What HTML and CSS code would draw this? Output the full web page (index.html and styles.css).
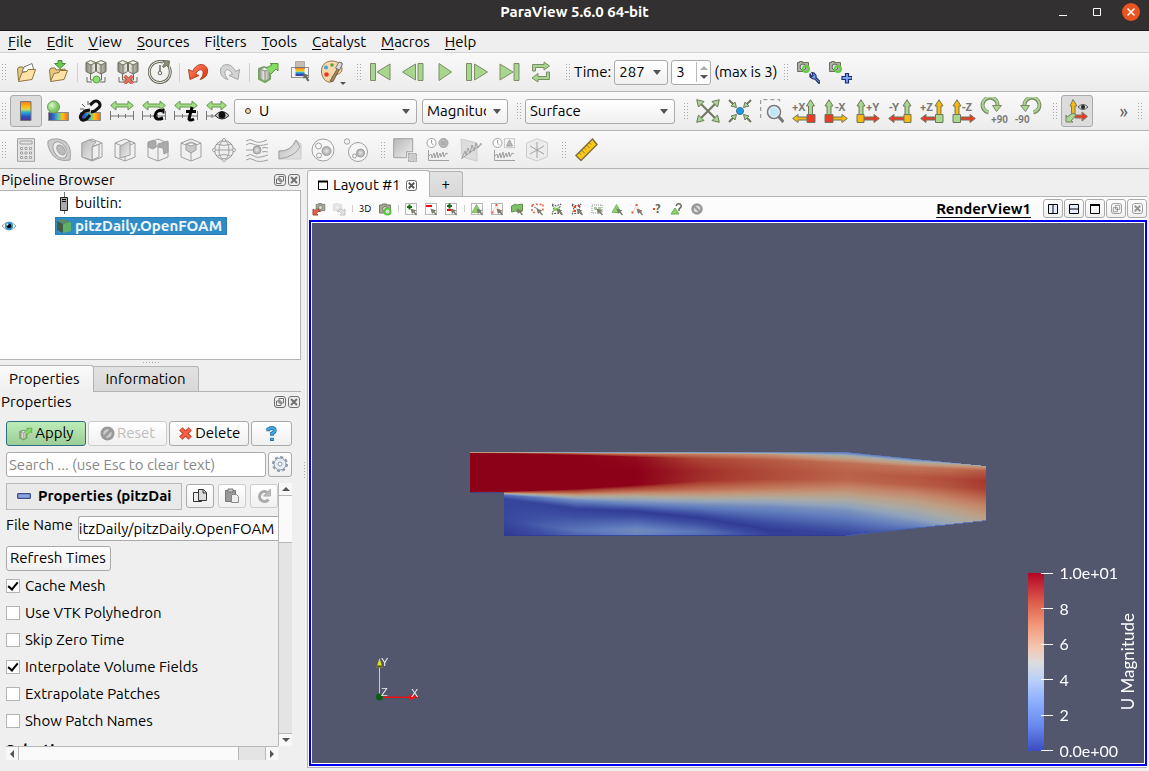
FILE: index.html
```html
<!DOCTYPE html>
<html lang="en">
<head>
  <meta charset="UTF-8">
  <meta name="viewport" content="width=device-width, initial-scale=1.0">
  <title>ParaView 5.6.0 64-bit</title>
  <link rel="stylesheet" href="styles.css">
</head>
<body>
  <!-- shared icon shapes -->
  <svg class="defs" aria-hidden="true">
    <defs>
      <linearGradient id="rainbow" x1="0" y1="1" x2="0" y2="0">
        <stop offset="0" stop-color="#5b2d91"/><stop offset=".2" stop-color="#2a4fc0"/><stop offset=".42" stop-color="#27a9d8"/>
        <stop offset=".58" stop-color="#c8d860"/><stop offset=".72" stop-color="#fcc010"/><stop offset="1" stop-color="#f47a20"/>
      </linearGradient>
      <linearGradient id="rainbowH">
        <stop offset="0" stop-color="#4b2d91"/><stop offset=".25" stop-color="#2a6fd0"/><stop offset=".5" stop-color="#5fc8a0"/>
        <stop offset=".7" stop-color="#fcc010"/><stop offset="1" stop-color="#f06a20"/>
      </linearGradient>
      <linearGradient id="metal"><stop offset="0" stop-color="#888878"/><stop offset=".5" stop-color="#f4f4ee"/><stop offset="1" stop-color="#8d8d7d"/></linearGradient>
      <linearGradient id="grey" x1="0" y1="0" x2="1" y2="1"><stop offset="0" stop-color="#b8b8b8"/><stop offset="1" stop-color="#eeeeee"/></linearGradient>
      <radialGradient id="ball"><stop offset="0" stop-color="#e8e8e8"/><stop offset="1" stop-color="#a8a8a8"/></radialGradient>
      <radialGradient id="greenBall" cx=".35" cy=".35"><stop offset="0" stop-color="#d8f8c8"/><stop offset="1" stop-color="#7cc860"/></radialGradient>
      <linearGradient id="redArrow" x1="0" y1="0" x2="1" y2="1"><stop offset="0" stop-color="#ff9070"/><stop offset="1" stop-color="#e02800"/></linearGradient>
    </defs>
    <symbol id="folder" viewBox="0 0 24 24">
      <path d="M4.500 20.500 3.500 9l1.500-2h4l1 2 9-1 1 4" fill="#e9c77c" stroke="#8c7440"/>
      <path d="M8 12 10 7l8-3.500L20 11z" fill="#fff" stroke="#777"/>
      <path d="m4.500 21.500 3.500-9 5-1 1-2 7.500 0-3.500 10z" fill="#fde3a6" stroke="#8c7440"/>
    </symbol>
    <symbol id="save" viewBox="0 0 24 24">
      <path d="M4.500 20.500 3.500 10l1.500-2h4l1 2 9-1 1 4" fill="#e9c77c" stroke="#8c7440"/>
      <path d="m4.500 21.500 3.500-8 5-1 1-2h7.500l-3.500 9z" fill="#fde3a6" stroke="#8c7440"/>
      <path d="M12 .5h4v3h3.500L14 8.500 8.500 3.500H12z" fill="#6ccc50" stroke="#4d8c3c"/>
    </symbol>
    <symbol id="servers" viewBox="0 0 24 24">
      <g stroke="#6d6d5c" fill="url(#metal)"><path d="M2 2.500v9l5 2.500 4.500-2.500v-9zM12.500 2.500v9L17 14l5-2.500v-9z"/></g>
      <g stroke="#6d6d5c" fill="#eeeee6"><path d="m2 2.500 4.500-2 5 2L7 5zM12.500 2.500l4.500-2 5 2L17 5z"/></g>
      <path d="M7 5v9M17 5v9M6.500 14v6h11v-6M3 17v5h5M21 17v5h-5" fill="none" stroke="#6d6d5c"/>
    </symbol>
    <symbol id="connect" viewBox="0 0 24 24"><use href="#servers"/><circle cx="12.500" cy="19.500" r="3.500" fill="#8ce070" stroke="#5c9c48"/></symbol>
    <symbol id="disconnect" viewBox="0 0 24 24"><use href="#servers"/><path d="m8.500 16 8 7.500m0-7.500-8 7.500" stroke="#a04838" stroke-width="3.500"/><path d="m8.500 16 8 7.500m0-7.500-8 7.500" stroke="#f07060" stroke-width="2"/></symbol>
    <symbol id="timer" viewBox="0 0 24 24">
      <path d="M15 2A10.500 10.500 0 1 0 21 7" fill="none" stroke="#6d6d5c" stroke-width="3"/><path d="M15 2A10.500 10.500 0 1 0 21 7" fill="none" stroke="#eee"/>
      <path d="M12 5v8" stroke="#6d6d5c" stroke-width="1.500"/><circle cx="12" cy="13" r="1.800" fill="#eee" stroke="#6d6d5c"/><path d="m14.500.5 7 .5-1 6.500-2-2-3 2-1-1 2-3z" fill="#8c8c7a" stroke="#6d6d5c"/>
    </symbol>
    <symbol id="undo" viewBox="0 0 24 24"><path d="m2.500 9.500 1.500 10 9-4-3.500-1.200C12.500 8 18 8.500 17 14c-.3 2-1.500 4-3 5.500 5-1 8-5 7.500-9.500C20.500 3 10.500 2 6.500 11.500z" fill="url(#redArrow)" stroke="#b04428"/></symbol>
    <symbol id="redo" viewBox="0 0 24 24"><path d="m21.500 9.500-1.500 10-9-4 3.500-1.200C11.500 8 6 8.500 7 14c.3 2 1.500 4 3 5.500-5-1-8-5-7.500-9.500C3.500 3 13.500 2 17.500 11.500z" fill="#d4d4d4" stroke="#a4a4a4"/></symbol>
    <symbol id="apply" viewBox="0 0 24 24">
      <path d="M3 9v10l6 3 5-3V9L8 7z" fill="url(#metal)" stroke="#74a860" stroke-width="2"/><path d="m3.500 9 5-1.500L13.500 9 9 11z" fill="#eee" stroke="#888"/><path d="M9 11v10" stroke="#777"/>
      <path d="m10 8 6-3-2-1.500h8v7.500l-2-2-5 5" fill="#84dc64" stroke="#569444"/>
    </symbol>
    <symbol id="colorsel" viewBox="0 0 24 24">
      <path d="M7.500 1.500h9V9h-9z" fill="#c4bcb4" stroke="#aaa"/><path d="M7.500 8h9v8h-9z" fill="url(#rainbow)"/>
      <path d="M3.500 7.500h17v10h-17z" fill="none" stroke="#333" stroke-dasharray="1 1"/><path d="m15 13 6 2.500-2 1 2.500 4-2 1-2.300-4-1.500 1.500z" fill="#6a6a5a"/>
    </symbol>
    <symbol id="palette" viewBox="0 0 24 24">
      <path d="M12 1C5 1 1 6 1.500 12S6 23 11 22c3-1 0-4 2-6s9-1 9-7c0-5-5-8-10-8z" fill="#f8d8a8" stroke="#8c7450"/>
      <circle cx="6" cy="7.500" r="2" fill="#38a8e0"/><circle cx="12" cy="5" r="1.800" fill="#60a040"/><circle cx="6.500" cy="14.500" r="2.300" fill="#e83828"/>
      <path d="m21 2-5 9-6 10 3 .5L18 12l4-7z" fill="#a88858" stroke="#6d6048"/><path d="m19 2 3.500 1.500-3 6.500-4-2z" fill="#ddd" stroke="#777"/>
    </symbol>
    <symbol id="first" viewBox="0 0 24 24"><path d="M1.500 3.500h5v17h-5zM21 4v16L8 12z"/></symbol>
    <symbol id="prev" viewBox="0 0 24 24"><path d="M17 3.500h5v17h-5zM14.500 4v16L1.500 12z"/></symbol>
    <symbol id="play" viewBox="0 0 24 24"><path d="M6 3.500v17L18.500 12z"/></symbol>
    <symbol id="next" viewBox="0 0 24 24"><path d="M1.500 3.500h5v17h-5zM9.500 4v16l13-8z"/></symbol>
    <symbol id="last" viewBox="0 0 24 24"><path d="M17 3.500h5v17h-5zM3 4v16l13-8z"/></symbol>
    <symbol id="loop" viewBox="0 0 24 24"><path d="M3.500 11V4.500H15V2l5.500 4-5.500 4V7.500H6.500V11zM20.500 12v7.500H9V22l-6-4 6-4.500v3h8.500V12z"/></symbol>
    <symbol id="camera" viewBox="0 0 24 24">
      <path d="M1.500 2.500h2v-1h3v1h6v9h-11z" fill="#b0b0a0" stroke="#6d6d5c"/><circle cx="7" cy="7" r="3" fill="#ddd" stroke="#666"/>
      <circle cx="10" cy="9" r="3" fill="none" stroke="#62cc40" stroke-width="2"/>
    </symbol>
    <symbol id="camtool" viewBox="0 0 24 24"><use href="#camera"/><path d="M14 13.500v3.500l3 2h2l4 4.500 1.500-1.500-4.500-4.500v-2l-2-2.500-2-.5 1 3-1.500 1z" fill="#7c98e0" stroke="#1c3070" stroke-width="1.200"/></symbol>
    <symbol id="camadd" viewBox="0 0 24 24"><use href="#camera"/><path d="M17.500 13.500h3v3h3.500v3h-3.500v3.500h-3v-3.500H14v-3h3.500z" fill="#80a0f0" stroke="#1c3070" stroke-width="1.200"/></symbol>
    <symbol id="cmap" viewBox="0 0 24 24"><path d="M6.500 2.500h10.500v19H6.500z" fill="url(#rainbow)" stroke="#777"/></symbol>
    <symbol id="solid" viewBox="0 0 24 24"><path d="M2.500 13.500h20v8h-20z" fill="url(#rainbowH)" stroke="#888"/><circle cx="7.500" cy="8" r="6" fill="url(#greenBall)" stroke="#70985c"/></symbol>
    <symbol id="edit" viewBox="0 0 24 24"><path d="M2.500 13.500h20v8h-20z" fill="url(#rainbowH)" stroke="#888"/><g fill="none" stroke="#111" stroke-width="3"><path d="m12 6 4-3.500q3-1.500 5 1t0 5L17 12l-4 1"/><path d="m12 11-5 1-4 4q-1.500 3 .5 4.500t5-.5L12 16"/></g><path d="m4 5 3 3m3-6v4M2 10h4" stroke="#555"/></symbol>
    <symbol id="range" viewBox="0 0 24 24"><path d="M.7 6.500 6 2v3h12V2l5.300 4.500L18 11V8H6v3z" fill="#a0dc80" stroke="#6b9656"/><path d="M.5 12v9M23.500 12v9M0 17h24M8.500 15v4M15.500 15v4" stroke="#777" fill="none"/></symbol>
    <symbol id="rangeC" viewBox="0 0 24 24"><use href="#range"/><path d="M21 12q-7-2-8 5 1 5 8 2" fill="none" stroke="#000" stroke-width="3"/><path d="M21.500 9.500v5" stroke="#000" stroke-width="2"/></symbol>
    <symbol id="rangeT" viewBox="0 0 24 24"><use href="#range"/><path d="m18 8-3 12q1 2 5 0M12 12.500h10" fill="none" stroke="#000" stroke-width="3"/></symbol>
    <symbol id="rangeEye" viewBox="0 0 24 24"><path d="M.7 6.500 6 2v3h9V2l5.300 4.500L15 11V8H6v3z" fill="#a0dc80" stroke="#6b9656"/><path d="M.5 12v9M0 17h9M6 15v4" stroke="#777"/><path d="M9 16.500q7-8 14 0-7 7-14 0z" fill="#ccc" stroke="#222"/><circle cx="16" cy="16" r="3.500" fill="#111"/></symbol>
    <symbol id="resetcam" viewBox="0 0 24 24"><path d="m3 3 18 18M21 3 3 21" stroke-width="2"/><path d="M.7.7 8 2.500 2.500 8zM23.300.7 21.500 8 16 2.500zM.7 23.300 2.500 16 8 21.500zM23.300 23.300 16 21.500l5.500-5.500z"/></symbol>
    <symbol id="zoomdata" viewBox="0 0 24 24"><path d="m1 1 5 5m17-5-5 5M1 23l5-5m17 5-5-5" stroke-width="2"/><path d="M8.500 8.500 7 3 3 7zM15.500 8.500 21 7l-4-4zM8.500 15.500 3 17l4 4zM15.500 15.500 17 21l4-4z"/><circle cx="12" cy="12" r="3.500" fill="#2498dc" stroke="#28709c"/></symbol>
    <symbol id="zoombox" viewBox="0 0 24 24"><path d="M.7 19V.7h19V3" fill="none" stroke="#888" stroke-dasharray="4 3"/><path d="m18 17 5.500 6" stroke="#777" stroke-width="3"/><circle cx="14" cy="13" r="6.500" fill="#c0e4fa" stroke="#777" stroke-width="1.500"/><circle cx="14" cy="13" r="5" fill="none" stroke="#f4f4f4"/></symbol>
    <symbol id="rot" viewBox="0 0 24 24"><path d="M8.500 15.500A7.500 7.500 0 1 1 17.500 9" fill="none" stroke="#7c8868" stroke-width="4"/><path d="M8.500 15A7.500 7.500 0 1 1 17.500 9" fill="none" stroke="#a8d890" stroke-width="2"/><path d="M12.500 8.500h9l-5 6z" fill="#a8d890" stroke="#7c8868"/></symbol>
    <symbol id="axesVis" viewBox="0 0 24 24"><path d="M10 16h7v-3l5.500 4.500L17 22v-3h-7z" fill="#e83c28" stroke="#7a7d66"/><path d="M6.500 16V7H5l3-6.500L12 7h-2v9z" fill="#f8b810" stroke="#7a7d66"/><path d="m11 16-5 6 2 1H1v-7l1 2 6-4z" fill="#a8d890" stroke="#7a7d66"/><path d="M13 8q5-5 10 0-5 5-10 0z" fill="#ddd" stroke="#555"/><circle cx="18" cy="8" r="2" fill="#222"/></symbol>
    <symbol id="calc" viewBox="0 0 24 24"><path d="M3.500.7h17v22.600h-17zM6 3h12v3H6z" fill="#e4e4e4"/><path d="M6.500 9.500h2v2h-2zm4.500 0h2v2h-2zm4.500 0h2v2h-2zm-9 4.500h2v2h-2zm4.500 0h2v2h-2zm4.500 0h2v2h-2zm-9 4.500h2v2h-2zm4.500 0h2v2h-2zm4.500 0h2v2h-2z" fill="#fff"/></symbol>
    <symbol id="contour" viewBox="0 0 24 24"><path d="M1 3Q9-2 19 4q6 6 4 18-14 3-20-9Q0 7 1 3z" fill="#ccc"/><ellipse cx="13" cy="12" rx="6" ry="9" transform="rotate(-35 13 12)" fill="#eee"/><ellipse cx="14" cy="12" rx="3.500" ry="5.500" transform="rotate(-35 14 12)" fill="#bbb"/></symbol>
    <symbol id="cube" viewBox="0 0 24 24"><path d="m12 1 10 4v14l-10 4-10-4V5zM2 5l10 4 10-4M12 9v14" fill="#f0f0f0"/></symbol>
    <symbol id="clip" viewBox="0 0 24 24"><use href="#cube"/><path d="m2 5 7-3 7 2-4 5v13L2 19z" fill="url(#grey)"/><path d="m12 9 7-3v13l-7 3"/></symbol>
    <symbol id="slice" viewBox="0 0 24 24"><use href="#cube"/><path d="m7 8 10-5v14L7 20z" fill="url(#grey)"/></symbol>
    <symbol id="thresh" viewBox="0 0 24 24"><use href="#cube"/><path d="m2 4 6-2 2 2v5L7 11 2 9zM12 6l10-3v11l-4 2-1-6-5-1z" fill="#aaa"/></symbol>
    <symbol id="extract" viewBox="0 0 24 24"><use href="#cube"/><path d="m7 6 5-2 5 2v6l-5 3-5-3zM7 6l5 2 5-2" fill="#c8c8c8"/></symbol>
    <symbol id="glyph" viewBox="0 0 24 24"><circle cx="12" cy="12" r="9.500" fill="#eee" stroke="#909090"/><ellipse cx="12" cy="12" rx="5" ry="9.500"/><path d="M2 12h20M5 6q7 3 14 0M5 18q7-3 14 0"/><g fill="#fff"><circle cx="12" cy="2" r="1.500"/><circle cx="12" cy="22" r="1.500"/><circle cx="2" cy="12" r="1.500"/><circle cx="22" cy="12" r="1.500"/></g></symbol>
    <symbol id="stream" viewBox="0 0 24 24"><path d="M1 3q4-3 8 0t13-1M1 7q4-3 7-1 5 3 15 0M1 18q5-3 8 0t14-1M1 22q4-3 8 0t14 0M1 12h7M17 10q3-1 6 0m-6 4q3-1 6 0"/><circle cx="12" cy="12" r="4" fill="url(#ball)"/></symbol>
    <symbol id="warp" viewBox="0 0 24 24"><path d="M1 21V13q12 0 17-11l5 4v15z" fill="#ddd" stroke="#ccc"/><path d="M1 21v-8q12 1 17-11l4 7Q16 19 1 21z" fill="url(#grey)"/></symbol>
    <symbol id="group" viewBox="0 0 24 24"><circle cx="12" cy="12" r="11" fill="#f6f6f6"/><circle cx="15.500" cy="13" r="4.500" fill="url(#ball)"/><circle cx="7.500" cy="8" r="3"/><circle cx="8" cy="17.500" r="2.500"/></symbol>
    <symbol id="level" viewBox="0 0 24 24"><circle cx="14" cy="14" r="9.500" fill="#f6f6f6"/><circle cx="16.500" cy="15" r="4" fill="url(#ball)"/><circle cx="10.500" cy="18" r="2"/><circle cx="3" cy="3.500" r="2.700"/></symbol>
    <symbol id="exsel" viewBox="0 0 24 24"><path d="M.7.7h19v13h-6v6H.7z" fill="url(#grey)"/><path d="M15.500 15.500h8v8h-8z" fill="#ccc" stroke-dasharray="2 1"/></symbol>
    <symbol id="wave" viewBox="0 0 24 24"><path d="M2.500 12v10.500H23M3 18l2-2 1 4 2-5 1 5 2-6 1 6 2-5 1 4 2-5 1 5 2-4 2 1"/></symbol>
    <symbol id="plottime" viewBox="0 0 24 24"><use href="#wave"/><circle cx="5.500" cy="5" r="4.500" fill="#fff"/><path d="M5.500 2v3l2 2"/><circle cx="17.500" cy="5" r="4.500" fill="#bbb"/><path d="M15 4h5m-5 2h5"/></symbol>
    <symbol id="plotline" viewBox="0 0 24 24"><path d="m2 1 16 4v18L3 19z" fill="#ddd" stroke="#ccc"/><path d="m3 20 3-7 1 4 2-7 2 5 2-8 2 6 2-8 2 5 3-5M2 21 23 6"/></symbol>
    <symbol id="plotsel" viewBox="0 0 24 24"><use href="#wave"/><circle cx="5.500" cy="5" r="4.500" fill="#fff"/><path d="M5.500 2v3l2 2"/><path d="M12.500.7h10v9h-10z" stroke-dasharray="1 1"/><path d="m17.500 2 3 6h-6z" fill="#bbb"/></symbol>
    <symbol id="probe" viewBox="0 0 24 24"><path d="m12 .7 10.500 4v14L12 23 1.500 19V5z" fill="#ececec" stroke="#ccc"/><path d="M12 4v16M5 8l14 8m0-8L5 16"/></symbol>
    <symbol id="ruler" viewBox="0 0 24 24"><path d="M2 17.500 18.500 1 23 6.500 7 22.500z" fill="#fcc818" stroke="#80703c" stroke-width="1.500"/><path d="m5 14.500 2 2m.5-4.500 3 3m-.5-5.500 2 2m.5-4.500 3 3M15 4.500l2 2" stroke="#80703c"/></symbol>
    <symbol id="float" viewBox="0 0 12 12"><rect x=".5" y=".5" width="11" height="11" rx="2.500"/><path d="M5 2.500h4.500V7H5zM2.500 5H7v4.500H2.500z"/></symbol>
    <symbol id="close" viewBox="0 0 12 12"><rect x=".5" y=".5" width="11" height="11" rx="2.500"/><path d="m3 3 6 6m0-6L3 9" stroke-width="2"/></symbol>
    <symbol id="cursor" viewBox="0 0 14 14"><path d="m6.500 6.500 6 2-2 1 2.500 3-1 1-2.500-3L8 12z" fill="#7c7c6c" stroke="none"/></symbol>
    <symbol id="selbox" viewBox="0 0 14 14"><path d="M1.500 1.500h11v11h-11z" fill="none" stroke="#777" stroke-dasharray="1 1"/></symbol>
    <symbol id="tri" viewBox="0 0 14 14"><path d="m6.500 2.500 4.500 8H2z" fill="#88d468" stroke="#80b86c"/></symbol>
    <symbol id="dots" viewBox="0 0 14 14"><path d="m6.500 3-4 7.500M6.500 3l4 7" fill="none" stroke="#f8d0c0"/><path d="M5.500 2h2v2h-2zM1.500 9.500h2v2h-2zM9.500 9h2v2h-2z" fill="#f05838"/></symbol>
    <symbol id="minicam" viewBox="0 0 14 14"><path d="M1.500 3h3V2h4v1h4v8h-11z" fill="#a8a898" stroke="#77776a"/><circle cx="7" cy="7" r="2.500" fill="#ddd" stroke="#77776a"/></symbol>
    <symbol id="poly" viewBox="0 0 14 14"><path d="m2 2 4 2 5-2-2 5 3 5-5-1-5 1 2-5z" fill="none" stroke="#444" stroke-dasharray="2 1"/></symbol>
  </svg>

  <header class="titlebar">
    <h1>ParaView 5.6.0 64-bit</h1>
    <div class="window-buttons">
      <button aria-label="Minimize"><svg width="10" height="10"><path d="M1 8.500h8" stroke="#fff"/></svg></button>
      <button aria-label="Maximize"><svg width="10" height="10"><path d="M1.500 1.500h7v7h-7z" stroke="#fff" fill="none"/></svg></button>
      <button class="win-close" aria-label="Close window"><svg width="10" height="10"><path d="m1.500 1.500 7 7m0-7-7 7" stroke="#fff" stroke-width="1.500"/></svg></button>
    </div>
  </header>

  <nav class="menubar">
    <a href="#"><u>F</u>ile</a>
    <a href="#"><u>E</u>dit</a>
    <a href="#"><u>V</u>iew</a>
    <a href="#"><u>S</u>ources</a>
    <a href="#">Fi<u>l</u>ters</a>
    <a href="#"><u>T</u>ools</a>
    <a href="#"><u>C</u>atalyst</a>
    <a href="#"><u>M</u>acros</a>
    <a href="#"><u>H</u>elp</a>
  </nav>

  <div class="toolbar-row main-tools">
    <div class="toolbar">
      <span class="handle"></span>
      <button class="tool" aria-label="Open"><svg><use href="#folder"/></svg></button>
      <button class="tool" aria-label="Save data"><svg><use href="#save"/></svg></button>
      <span class="sep"></span>
      <button class="tool" aria-label="Connect"><svg><use href="#connect"/></svg></button>
      <button class="tool" aria-label="Disconnect"><svg><use href="#disconnect"/></svg></button>
      <button class="tool" aria-label="Timer"><svg><use href="#timer"/></svg></button>
      <span class="sep"></span>
      <button class="tool" aria-label="Undo"><svg><use href="#undo"/></svg></button>
      <button class="tool" aria-label="Redo" disabled><svg><use href="#redo"/></svg></button>
      <span class="sep"></span>
      <button class="tool" aria-label="Auto apply"><svg><use href="#apply"/></svg></button>
      <button class="tool" aria-label="Find data"><svg><use href="#colorsel"/></svg></button>
      <button class="tool has-menu" aria-label="Color palette"><svg><use href="#palette"/></svg></button>
    </div>
    <div class="toolbar vcr">
      <span class="handle"></span>
      <button class="tool" aria-label="First frame"><svg><use href="#first"/></svg></button>
      <button class="tool" aria-label="Previous frame"><svg><use href="#prev"/></svg></button>
      <button class="tool" aria-label="Play"><svg><use href="#play"/></svg></button>
      <button class="tool" aria-label="Next frame"><svg><use href="#next"/></svg></button>
      <button class="tool" aria-label="Last frame"><svg><use href="#last"/></svg></button>
      <button class="tool" aria-label="Loop"><svg><use href="#loop"/></svg></button>
    </div>
    <div class="toolbar time">
      <span class="handle"></span>
      <label for="time">Time:</label>
      <span class="combo combo-time"><select id="time"><option>287</option></select></span>
      <span class="spin">
        <input type="number" value="3" min="0" max="3" aria-label="Time step">
        <span class="spin-buttons"><button class="step-up" aria-label="Step up" disabled></button><button class="step-down" aria-label="Step down"></button></span>
      </span>
      <span>(max is 3)</span>
    </div>
    <div class="toolbar">
      <span class="handle"></span>
      <button class="tool" aria-label="Adjust camera"><svg><use href="#camtool"/></svg></button>
      <button class="tool" aria-label="Add camera"><svg><use href="#camadd"/></svg></button>
    </div>
  </div>

  <div class="toolbar-row">
    <div class="toolbar">
      <span class="handle"></span>
      <button class="tool pressed" aria-label="Color legend"><svg><use href="#cmap"/></svg></button>
      <button class="tool" aria-label="Edit color map"><svg><use href="#solid"/></svg></button>
      <button class="tool" aria-label="Separate color map"><svg><use href="#edit"/></svg></button>
      <button class="tool" aria-label="Rescale to data range"><svg><use href="#range"/></svg></button>
      <button class="tool" aria-label="Rescale to custom range"><svg><use href="#rangeC"/></svg></button>
      <button class="tool" aria-label="Rescale over time"><svg><use href="#rangeT"/></svg></button>
      <button class="tool" aria-label="Rescale to visible range"><svg><use href="#rangeEye"/></svg></button>
      <span class="combo combo-array">
        <svg width="8" height="8"><circle cx="4" cy="4" r="2.500" fill="#fcd8a0" stroke="#333"/></svg>
        <select aria-label="Coloring array"><option>U</option></select>
      </span>
      <span class="combo combo-comp"><select aria-label="Component"><option>Magnitude</option></select></span>
    </div>
    <div class="toolbar">
      <span class="handle"></span>
      <span class="combo combo-repr"><select aria-label="Representation"><option>Surface</option></select></span>
    </div>
    <div class="toolbar cam">
      <span class="handle"></span>
      <button class="tool" aria-label="Reset camera"><svg><use href="#resetcam"/></svg></button>
      <button class="tool" aria-label="Zoom to data"><svg><use href="#zoomdata"/></svg></button>
      <button class="tool" aria-label="Zoom to box"><svg><use href="#zoombox"/></svg></button>
      <button class="tool"><svg viewBox="0 0 24 24"><text x="0" y="12">+X</text><path class="g" d="M16.500 16V7H14.500L18.500.7l4 6.300H20.500v9z"/><path class="y" d="M15 18H6v-2.500l-5.300 4 5.300 4V21h9z"/><path class="r" d="M15 15.500h8v8h-8z"/></svg></button>
      <button class="tool"><svg viewBox="0 0 24 24"><text x="11" y="12">-X</text><path class="g" d="M3 16V7H1L5 .7 9 7H7v9z"/><path class="y" d="M8 18h10v-2.500l5.300 4-5.300 4V21H8z"/><path class="r" d="M1 15.500h8v8H1z"/></svg></button>
      <button class="tool"><svg viewBox="0 0 24 24"><text x="10" y="12">+Y</text><path class="g" d="M3 16V7H1L5 .7 9 7H7v9z"/><path class="r" d="M8 18h10v-2.500l5.300 4-5.300 4V21H8z"/><path class="y" d="M1 15.500h7v8H1z"/></svg></button>
      <button class="tool"><svg viewBox="0 0 24 24"><text x="1" y="12">-Y</text><path class="g" d="M17 16V7H15L19 .7 23 7H21v9z"/><path class="r" d="M16 18H6v-2.500l-5.300 4 5.300 4V21h10z"/><path class="y" d="M16 15.500h7v8h-7z"/></svg></button>
      <button class="tool"><svg viewBox="0 0 24 24"><text x="0" y="12">+Z</text><path class="y" d="M17 16V7H15L19 .7 23 7H21v9z"/><path class="r" d="M16 18H6v-2.500l-5.300 4 5.300 4V21h10z"/><path class="g" d="M15.500 15.500h7.500v8h-7.500z"/></svg></button>
      <button class="tool"><svg viewBox="0 0 24 24"><text x="10" y="12">-Z</text><path class="y" d="M3 16V7H1L5 .7 9 7H7v9z"/><path class="r" d="M8 18h10v-2.500l5.300 4-5.300 4V21H8z"/><path class="g" d="M1 15.500h7.500v8H1z"/></svg></button>
      <button class="tool"><svg viewBox="0 0 24 24"><svg x="-4" y="-2" width="24" height="24"><use href="#rot"/></svg><text class="deg" x="7" y="24">+90</text></svg></button>
      <button class="tool"><svg viewBox="0 0 24 24"><g transform="matrix(-1 0 0 1 26 -2)"><svg width="24" height="24"><use href="#rot"/></svg></g><text class="deg" x="-1" y="24">-90</text></svg></button>
    </div>
    <div class="toolbar">
      <span class="handle"></span>
      <button class="tool pressed" aria-label="Show orientation axes"><svg><use href="#axesVis"/></svg></button>
    </div>
    <button class="more">»</button>
    <span class="handle"></span>
  </div>

  <div class="toolbar-row filters">
    <div class="toolbar">
      <span class="handle"></span>
      <button class="tool" aria-label="Calculator" disabled><svg><use href="#calc"/></svg></button>
      <button class="tool" aria-label="Contour" disabled><svg><use href="#contour"/></svg></button>
      <button class="tool" aria-label="Clip" disabled><svg><use href="#clip"/></svg></button>
      <button class="tool" aria-label="Slice" disabled><svg><use href="#slice"/></svg></button>
      <button class="tool" aria-label="Threshold" disabled><svg><use href="#thresh"/></svg></button>
      <button class="tool" aria-label="Extract subset" disabled><svg><use href="#extract"/></svg></button>
      <button class="tool" aria-label="Glyph" disabled><svg><use href="#glyph"/></svg></button>
      <button class="tool" aria-label="Stream tracer" disabled><svg><use href="#stream"/></svg></button>
      <button class="tool" aria-label="Warp by vector" disabled><svg><use href="#warp"/></svg></button>
      <button class="tool" aria-label="Group datasets" disabled><svg><use href="#group"/></svg></button>
      <button class="tool" aria-label="Extract level" disabled><svg><use href="#level"/></svg></button>
    </div>
    <div class="toolbar">
      <span class="handle"></span>
      <button class="tool" aria-label="Extract selection" disabled><svg><use href="#exsel"/></svg></button>
      <button class="tool" aria-label="Plot global variables over time" disabled><svg><use href="#plottime"/></svg></button>
      <button class="tool" aria-label="Plot over line" disabled><svg><use href="#plotline"/></svg></button>
      <button class="tool" aria-label="Plot selection over time" disabled><svg><use href="#plotsel"/></svg></button>
      <button class="tool" aria-label="Probe location" disabled><svg><use href="#probe"/></svg></button>
    </div>
    <div class="toolbar">
      <span class="handle"></span>
      <button class="tool" aria-label="Ruler"><svg><use href="#ruler"/></svg></button>
    </div>
  </div>

  <main class="workspace">
    <aside class="dock">
      <div class="dock-title">
        <h2>Pipeline Browser</h2>
        <button aria-label="Float"><svg><use href="#float"/></svg></button>
        <button aria-label="Close"><svg><use href="#close"/></svg></button>
      </div>
      <ul class="tree">
        <li>
          <svg class="node-icon" viewBox="0 0 18 22"><path d="M9.500 0v5m0 14v3" stroke="#777"/><path d="M5.500 5.500h7v13h-7z" fill="#aaa" stroke="#222"/><path d="M7 7.500h4M7 9.500h4" stroke="#000"/></svg>
          <span class="node">builtin:</span>
        </li>
        <li>
          <svg class="eye" viewBox="0 0 16 12"><path d="M1 6q7-8 14 0-7 8-14 0z" fill="#fff" stroke="#999"/><circle cx="8" cy="6" r="4" fill="#2a94d0"/><circle cx="8" cy="6" r="2.300" fill="#000"/><circle cx="6.500" cy="4.500" r="1" fill="#fff"/></svg>
          <span class="node selected"><svg viewBox="0 0 18 16"><path d="m2 3 6-2 8 3-7 2z" fill="#5c8c60"/><path d="m2 3 6 3v9l-6-3z" fill="#3d5c48"/><path d="m8 6 8-2v9l-8 2z" fill="#60b068"/></svg>pitzDaily.OpenFOAM</span>
        </li>
      </ul>
      <div class="grip"></div>
      <div class="tabs">
        <button class="tab active">Properties</button>
        <button class="tab">Information</button>
      </div>
      <div class="dock-title">
        <h2>Properties</h2>
        <button aria-label="Float"><svg><use href="#float"/></svg></button>
        <button aria-label="Close"><svg><use href="#close"/></svg></button>
      </div>
      <div class="panel">
        <div class="actions">
          <button class="btn apply"><svg><use href="#apply"/></svg>Apply</button>
          <button class="btn" disabled><svg viewBox="0 0 16 16"><circle cx="8" cy="8" r="6" fill="#ccc" stroke="#999" stroke-width="3"/><path d="m4 12 8-8" stroke="#999" stroke-width="3"/></svg>Reset</button>
          <button class="btn"><svg viewBox="0 0 16 16"><path d="m3 3 10 10m0-10L3 13" stroke="#b04030" stroke-width="5"/><path d="m3 3 10 10m0-10L3 13" stroke="#f86040" stroke-width="3"/></svg>Delete</button>
          <button class="btn help" aria-label="Help"><svg viewBox="0 0 16 16"><path d="M4.500 5.500V3.500Q8 1 11 3q2 3-2.500 5v2.500M8.500 12.500V16" fill="none" stroke="#286890" stroke-width="4"/><path d="M4.500 5V3.500Q8 1 11 3q2 3-2.500 5v2M8.500 13v2" fill="none" stroke="#38a8e8" stroke-width="2.500"/></svg></button>
        </div>
        <div class="search">
          <input type="text" placeholder="Search ... (use Esc to clear text)" aria-label="Search properties">
          <button class="btn" aria-label="Advanced"><svg viewBox="0 0 18 18"><circle cx="9" cy="9" r="7" fill="none" stroke="#8898a8" stroke-width="2" stroke-dasharray="3 2.500"/><circle cx="9" cy="9" r="6" fill="#e8eef4" stroke="#8898a8"/><circle cx="9" cy="9" r="2" fill="#fff" stroke="#8898a8"/></svg></button>
        </div>
        <div class="scroll-area">
          <div class="viewport">
            <div class="group-head">
              <button class="group-name"><svg viewBox="0 0 14 6"><path d="M.7.7h12.600v4.600H.7z" fill="#88a4e8" stroke="#1c3070"/></svg><span>Properties (pitzDaily)</span></button>
              <button class="btn" aria-label="Copy"><svg viewBox="0 0 16 16"><path d="M1.500 4.500h6l2 2v7h-8z" fill="#eee" stroke="#333"/><path d="M6.500 1.500h5l3 3v8h-8z" fill="#ddd" stroke="#333"/><path d="M11 2v3h3" fill="none" stroke="#333"/></svg></button>
              <button class="btn" aria-label="Paste" disabled><svg viewBox="0 0 16 16"><path d="M1.500 2.500h10v11h-10z" fill="#999" stroke="#777"/><path d="M4 1h5v3H4z" fill="#ccc" stroke="#777"/><path d="M7.500 6.500h5l2 2v6h-7z" fill="#eee" stroke="#888"/></svg></button>
              <button class="btn" aria-label="Restore defaults" disabled><svg viewBox="0 0 16 16"><path d="M12.500 11.500A5 5 0 1 1 12 5" fill="none" stroke="#aaa" stroke-width="3"/><path d="M14.500 1v7h-7z" fill="#bbb" stroke="#aaa"/></svg></button>
            </div>
            <div class="field">
              <label for="filename">File Name</label>
              <input type="text" id="filename" value="itzDaily/pitzDaily.OpenFOAM">
            </div>
            <button class="btn refresh">Refresh Times</button>
            <label class="check"><input type="checkbox" checked>Cache Mesh</label>
            <label class="check"><input type="checkbox">Use VTK Polyhedron</label>
            <label class="check"><input type="checkbox">Skip Zero Time</label>
            <label class="check"><input type="checkbox" checked>Interpolate Volume Fields</label>
            <label class="check"><input type="checkbox">Extrapolate Patches</label>
            <label class="check"><input type="checkbox">Show Patch Names</label>
            <h3>Selections</h3>
          </div>
          <div class="vbar"><i class="arr a-up"></i><span class="thumb"></span><i class="arr a-down"></i></div>
          <div class="hbar"><i class="arr a-left"></i><span class="thumb"></span><i class="arr a-right"></i></div>
        </div>
      </div>
    </aside>

    <div class="splitter"></div>

    <section class="views">
      <div class="tabs">
        <button class="tab active layout"><svg width="10" height="10"><path d="M.5 1.500h9v8h-9z" fill="none" stroke="#000"/><path d="M0 1.500h10" stroke="#000" stroke-width="2"/></svg>Layout #1<svg class="x" width="11" height="11"><use href="#close"/></svg></button>
        <button class="tab plus">+</button>
      </div>
      <div class="frame">
        <div class="viewbar">
          <button class="mini" aria-label="Camera undo"><svg viewBox="0 0 14 14"><svg x="3" y="0" width="11" height="11"><use href="#minicam"/></svg><path d="M1 7v6h5L4.500 11.500q1-3 4-2Q6 5 3 8.500z" fill="#e86048" stroke="#a04838"/></svg></button>
          <button class="mini faded" aria-label="Camera redo"><svg viewBox="0 0 14 14"><svg x="0" y="0" width="11" height="11"><use href="#minicam"/></svg><path d="M13 7v6H8l1.500-1.500q-1-3-4-2Q8 5 11 8.500z" fill="#ccc" stroke="#888"/></svg></button>
          <span class="sep"></span>
          <button class="mini">3D</button>
          <button class="mini" aria-label="Capture"><svg viewBox="0 0 14 14"><use href="#minicam"/><circle cx="9.500" cy="9.500" r="3" fill="#ddd" stroke="#58c838" stroke-width="2"/></svg></button>
          <span class="sep"></span>
          <button class="mini" aria-label="Add selection"><svg viewBox="0 0 14 14"><use href="#selbox"/><path d="M3 5h5M5.500 2.500v5" stroke="#107010" stroke-width="2"/><use href="#cursor"/></svg></button>
          <button class="mini" aria-label="Subtract selection"><svg viewBox="0 0 14 14"><use href="#selbox"/><path d="M2 4h6" stroke="#e01010" stroke-width="2"/><use href="#cursor"/></svg></button>
          <button class="mini" aria-label="Toggle selection"><svg viewBox="0 0 14 14"><use href="#selbox"/><path d="M3 4h5M5.500 1.500v5" stroke="#107010" stroke-width="2"/><path d="M3 8h6" stroke="#e01010" stroke-width="2"/><use href="#cursor"/></svg></button>
          <span class="sep"></span>
          <button class="mini" aria-label="Select cells on"><svg viewBox="0 0 14 14"><use href="#selbox"/><use href="#tri"/><use href="#cursor"/></svg></button>
          <button class="mini" aria-label="Select points on"><svg viewBox="0 0 14 14"><use href="#selbox"/><use href="#dots"/><use href="#cursor"/></svg></button>
          <button class="mini" aria-label="Select cells through"><svg viewBox="0 0 14 14"><path d="m1.500 4 4-2 1 1 6-1v7l-4 1-3-1-4 1z" fill="#80c068" stroke="#609050"/><use href="#cursor"/></svg></button>
          <button class="mini" aria-label="Select points through"><svg viewBox="0 0 14 14"><path d="m2 3 4-1 3 1 4-1v8M2 3v7l5 1" fill="none" stroke="#e86048" stroke-width="1.500" stroke-dasharray="2 2"/><path d="m4 5 4 2" stroke="#888"/><use href="#cursor"/></svg></button>
          <button class="mini" aria-label="Select cells polygon"><svg viewBox="0 0 14 14"><use href="#poly"/><path d="m4 5 3 1 3-2-2 5H4z" fill="#88d468"/><use href="#cursor"/></svg></button>
          <button class="mini" aria-label="Select points polygon"><svg viewBox="0 0 14 14"><use href="#poly"/><path d="M4 4h2v2H4zM8 3h2v2H8zM4 8h2v2H4z" fill="#f04020"/><use href="#cursor"/></svg></button>
          <button class="mini" aria-label="Select block"><svg viewBox="0 0 14 14"><path d="M2 3h10v8H2z" fill="none" stroke="#888" stroke-dasharray="1 1"/><path d="M4 5h3v3H4zM8 5h3v3H8z" fill="#b0c8a8"/><use href="#cursor"/></svg></button>
          <button class="mini" aria-label="Interactive select cells"><svg viewBox="0 0 14 14"><use href="#tri"/><use href="#cursor"/></svg></button>
          <button class="mini" aria-label="Interactive select points"><svg viewBox="0 0 14 14"><use href="#dots"/><use href="#cursor"/></svg></button>
          <button class="mini query" aria-label="Hover points"><i class="dot"></i>?</button>
          <button class="mini query" aria-label="Hover cells"><svg viewBox="0 0 14 14"><path d="m5 6 4 6H1z" fill="#88d468" stroke="#70a858"/><path d="M6 4q1-3 4-2 3 2-1 5v2" fill="none" stroke="#666658" stroke-width="1.500"/></svg></button>
          <button class="mini" aria-label="Clear selection"><svg viewBox="0 0 14 14"><circle cx="7" cy="7" r="4.500" fill="#ddd" stroke="#999" stroke-width="2.500"/><path d="m4 4 6 6" stroke="#999" stroke-width="2"/></svg></button>
          <h2>RenderView1</h2>
          <div class="view-buttons">
            <button class="btn" aria-label="Split horizontal"><svg width="10" height="10"><path d="M.5.5h9v9h-9zM5 0v10" fill="#e8ecff" stroke="#000"/></svg></button>
            <button class="btn" aria-label="Split vertical"><svg width="10" height="10"><path d="M.5.5h9v9h-9zM0 5h10" fill="#e8ecff" stroke="#000"/></svg></button>
            <button class="btn" aria-label="Maximize view"><svg width="10" height="10"><path d="M.5.5h9v9h-9z" fill="none" stroke="#000"/><path d="M0 1h10" stroke="#000" stroke-width="2"/></svg></button>
            <button class="btn faded" aria-label="Float view"><svg width="11" height="11"><use href="#float"/></svg></button>
            <button class="btn faded" aria-label="Close view"><svg width="11" height="11"><use href="#close"/></svg></button>
          </div>
        </div>
        <div class="render">
          <canvas id="flow" width="516" height="85"></canvas>
          <svg class="axes" viewBox="0 0 48 48">
            <path d="M10 8h1v31h-1z" fill="#e0e020"/><path d="M7.500 9.500 10.500 0l3 9.500z" fill="#e0e020"/><path d="M8 7.500h5v2H8z" fill="#555510"/>
            <path d="M11 38.500h31v1.500H11z" fill="#f01010"/><path d="M40 36 50 39 40 42z" fill="#f01010"/>
            <circle cx="10.500" cy="39" r="3.500" fill="#0c5c14"/>
            <text x="12" y="8">Y</text><text x="12" y="38">Z</text><text x="42" y="39">X</text>
          </svg>
          <div class="legend">
            <div class="ramp"></div>
            <ul><li>1.0e+01</li><li>8</li><li>6</li><li>4</li><li>2</li><li>0.0e+00</li></ul>
            <span class="legend-title">U Magnitude</span>
          </div>
        </div>
      </div>
    </section>
  </main>

  <script src="flow.js"></script>
</body>
</html>
```

FILE: styles.css
```css
* {
  box-sizing: border-box;
}

body {
  margin: 0;
  height: 100vh;
  display: flex;
  flex-direction: column;
  overflow: hidden;
  background-color: #efefef;
  color: #000;
  font-family: Ubuntu, "Noto Sans", sans-serif;
  font-size: 15px;
  line-height: 20px;
}

button, input, select {
  font: inherit;
  color: inherit;
  margin: 0;
  padding: 0;
}

button {
  border: none;
  background: none;
  white-space: nowrap;
}

h1, h2, h3, ul {
  margin: 0;
  padding: 0;
  list-style: none;
  font-size: 15px;
  font-weight: normal;
}

svg {
  overflow: visible;
  flex: none;
  fill: none;
}

.defs {
  position: absolute;
  width: 0;
  height: 0;
}

/* title bar and menus */
.titlebar {
  display: grid;
  grid-template-columns: 1fr auto 1fr;
  align-items: center;
  flex: none;
  height: 31px;
  padding: 0 9px 6px;
  background-color: #323030;
  border-bottom: 1px solid #1c1b1b;
  color: #fff;
}

.titlebar h1 {
  grid-column: 2;
  font-size: 15px;
  font-weight: bold;
}

.window-buttons {
  display: flex;
  justify-content: flex-end;
  align-items: center;
  gap: 16px;
}

.window-buttons button {
  display: grid;
  place-items: center;
  width: 18px;
  height: 18px;
}

.window-buttons .win-close {
  border-radius: 50%;
  background-color: #e95420;
}

.menubar {
  display: flex;
  flex: none;
  gap: 15px;
  height: 21px;
  padding: 1px 8px;
}

.menubar a {
  color: #000;
  text-decoration: none;
}

.menubar u {
  text-underline-offset: 2px;
}

/* toolbars */
.toolbar-row {
  display: flex;
  align-items: center;
  flex: none;
  height: 39px;
  border-bottom: 1px solid #b4b4b4;
  background: linear-gradient(#f9f9f9, #ececec);
}

.main-tools {
  height: 40px;
  border-top: 1px solid #d4d4d4;
}

.toolbar {
  display: flex;
  align-items: center;
  margin-right: 7px;
}

.handle {
  width: 6px;
  height: 18px;
  margin: 0 3px 0 1px;
  background: radial-gradient(#aaa 30%, transparent 30%) 0 0 / 3px 3px;
}

.sep {
  width: 1px;
  height: 19px;
  margin: 0 2px 0 3px;
  background-color: #d0d0d0;
}

.tool {
  display: grid;
  place-items: center;
  width: 32px;
  height: 32px;
  border: 1px solid transparent;
  border-radius: 3px;
}

.tool svg {
  width: 24px;
  height: 24px;
}

.tool.pressed {
  background-color: #dcdcdc;
  border-color: #aaa;
}

.has-menu {
  position: relative;
}

.has-menu::after {
  content: "";
  position: absolute;
  right: 1px;
  bottom: 2px;
  border: 3px solid transparent;
  border-top-color: #555;
  border-bottom: none;
}

.vcr svg {
  fill: #a8d68c;
  stroke: #7c8c68;
}

.time {
  gap: 3px;
}

.time .handle {
  margin-right: 0;
}

.main-tools .time {
  margin-right: 5px;
}

.cam svg {
  fill: #a8d890;
  stroke: #70755e;
}

.cam text {
  fill: #777;
  stroke: none;
  font-size: 11px;
  font-weight: bold;
}

.cam .deg {
  font-size: 10px;
}

.cam .g {
  fill: #a8d890;
}

.cam .y {
  fill: #f8b810;
}

.cam .r {
  fill: #e83c28;
}

.more {
  margin-left: auto;
  padding-right: 8px;
  color: #555;
  font-size: 18px;
}

.more + .handle {
  margin-right: 6px;
}

.filters {
  height: 38px;
}

.filters .toolbar {
  margin-right: 6px;
}

.filters .tool {
  width: 33px;
  padding-right: 1px;
}

.filters svg {
  stroke: #a0a0a0;
}

/* drop-downs and the step box */
.combo, .spin {
  display: flex;
  align-items: center;
  height: 25px;
  border: 1px solid #aaa;
  border-radius: 3px;
  background: linear-gradient(#fff, #f0f0f0);
}

.combo {
  padding: 0 6px 0 4px;
}

.combo::after {
  content: "";
  border: 4px solid transparent;
  border-top: 5px solid #555;
  border-bottom: none;
}

.combo select {
  flex: 1;
  min-width: 0;
  border: none;
  background: none;
  appearance: none;
}

.combo-time {
  width: 54px;
}

.combo-array {
  width: 183px;
  padding-left: 9px;
  gap: 7px;
}

.combo-comp {
  width: 86px;
  margin-left: 5px;
  gap: 7px;
}

.combo-repr {
  width: 150px;
}

.spin {
  width: 40px;
  background: #fff;
}

.spin input {
  width: 25px;
  padding-left: 4px;
  border: none;
  border-right: 1px solid #bbb;
  background: none;
  appearance: textfield;
}

.spin input::-webkit-inner-spin-button {
  display: none;
}

.spin-buttons {
  flex: 1;
  display: grid;
  justify-items: center;
  gap: 5px;
}

.spin-buttons button {
  border: 4px solid transparent;
}

.spin-buttons .step-up {
  border-top: none;
  border-bottom-color: #aaa;
}

.spin-buttons .step-down {
  border-bottom: none;
  border-top-color: #555;
}

/* left dock */
.workspace {
  display: flex;
  flex: 1;
  min-height: 0;
}

.dock {
  display: flex;
  flex-direction: column;
  flex: none;
  width: 301px;
}

.dock-title {
  display: flex;
  align-items: center;
  gap: 2px;
  height: 21px;
  padding: 0 1px;
}

.dock-title h2 {
  flex: 1;
}

.dock-title button {
  display: grid;
}

.dock-title svg {
  width: 12px;
  height: 12px;
  stroke: #707070;
}

.tree {
  height: 22vh;
  border: 1px solid #b4b4b4;
  border-left: none;
  background-color: #fff;
}

.tree li {
  display: flex;
  align-items: center;
  height: 22px;
  padding-left: 55px;
}

.tree li:first-child {
  height: 24px;
}

.node-icon {
  width: 18px;
  height: 22px;
}

.tree .eye {
  width: 16px;
  height: 12px;
  margin: 0 38px 0 -54px;
}

.node {
  display: flex;
  align-items: center;
  height: 18px;
  padding-left: 2px;
}

.node.selected {
  gap: 2px;
  padding: 0 5px 0 0;
  background-color: #308cc6;
  outline: 1px solid #2a7cb0;
  outline-offset: -1px;
  color: #eef6fc;
  font-weight: bold;
}

.node svg {
  width: 18px;
  height: 16px;
}

.grip {
  height: 5px;
  margin: 0 auto;
  width: 18px;
  background: radial-gradient(#aaa 30%, transparent 30%) 0 1px / 3px 3px repeat-x;
}

.tabs {
  display: flex;
  align-items: flex-end;
  flex: none;
  height: 27px;
  box-shadow: inset 0 -1px #b4b4b4;
}

.tab {
  height: 26px;
  padding: 0 12px;
  border: 1px solid #b4b4b4;
  border-left: none;
  border-radius: 0 3px 0 0;
  background: linear-gradient(#e2e2e2, #d8d8d8);
}

.tab.active {
  height: 27px;
  padding: 0 13px 0 9px;
  border-bottom: none;
  background: linear-gradient(#fafafa, #efefef);
}

.panel {
  display: flex;
  flex-direction: column;
  flex: 1;
  min-height: 0;
  gap: 6px;
  padding: 8px 9px 11px 6px;
}

.actions {
  display: flex;
  gap: 2px;
}

.btn {
  display: flex;
  align-items: center;
  justify-content: center;
  gap: 2px;
  height: 25px;
  border: 1px solid #aaa;
  border-radius: 3px;
  background: linear-gradient(#fff, #f0f0f0);
}

.btn:disabled {
  color: #bebebe;
  border-color: #ccc;
}

.actions .btn {
  flex: 2;
}

.actions .help {
  flex: 1;
}

.actions svg {
  width: 15px;
  height: 15px;
}

.actions .apply {
  border-color: #2a7080;
  background: linear-gradient(#bcecb8, #9ccc98);
}

.search {
  display: flex;
  gap: 2px;
}

.search input, .field input {
  flex: 1;
  min-width: 0;
  height: 25px;
  padding: 0 2px;
  border: 1px solid #aaa;
  border-radius: 3px;
  background-color: #fff;
}

.search input::placeholder {
  color: #888;
}

.search .btn {
  width: 24px;
}

.search svg {
  width: 18px;
}

.scroll-area {
  display: grid;
  grid-template: minmax(0, 1fr) 14px / minmax(0, 1fr) 14px;
  flex: 1;
  min-height: 0;
}

.viewport {
  overflow: hidden;
}

.group-head {
  display: flex;
  align-items: center;
  gap: 4px;
}

.group-name {
  display: flex;
  align-items: center;
  flex: 1;
  min-width: 0;
  gap: 7px;
  height: 27px;
  padding: 0 9px 0 10px;
  border: 1px solid #b8b8b8;
  background-color: #e9e9e9;
  font-weight: bold;
}

.group-name svg {
  width: 14px;
}

.group-name span {
  overflow: hidden;
}

.group-head .btn {
  width: 28px;
  height: 24px;
}

.group-head .btn svg {
  width: 16px;
}

.field {
  display: flex;
  gap: 5px;
  margin: 6px 0 5px;
}

.field label {
  line-height: 18px;
}

.field input {
  padding: 0;
  border-right: none;
  border-radius: 3px 0 0 3px;
}

.refresh {
  padding: 0 4px 0 3px;
  margin-bottom: 2px;
}

.check {
  display: flex;
  align-items: center;
  gap: 5px;
  height: 27px;
}

.check input {
  display: grid;
  place-items: center;
  width: 14px;
  height: 14px;
  border: 1px solid #b4b4b4;
  background-color: #fff;
  appearance: none;
}

.check input:checked::before {
  content: "";
  width: 4px;
  height: 8px;
  margin-bottom: 2px;
  border: solid #000;
  border-width: 0 2px 2px 0;
  transform: rotate(40deg);
}

.viewport h3 {
  padding-top: 5px;
  font-weight: bold;
}

.vbar, .hbar {
  display: flex;
  background-color: #e4e4e4;
}

.vbar {
  flex-direction: column;
  border-left: 1px solid #b8b8b8;
}

.hbar {
  border-top: 1px solid #b8b8b8;
}

.arr {
  display: grid;
  place-items: center;
  width: 13px;
  height: 13px;
  background-color: #f8f8f8;
}

.arr::before {
  content: "";
  border: 4px solid transparent;
}

.a-up {
  border-bottom: 1px solid #b8b8b8;
}

.a-up::before {
  border-top: none;
  border-bottom-color: #555;
}

.a-down {
  margin-top: auto;
  border-top: 1px solid #b8b8b8;
}

.a-down::before {
  border-bottom: none;
  border-top-color: #555;
}

.a-left {
  border-right: 1px solid #b8b8b8;
}

.a-left::before {
  border-left: none;
  border-right-color: #555;
}

.a-right {
  margin-left: auto;
  border-left: 1px solid #b8b8b8;
}

.a-right::before {
  border-right: none;
  border-left-color: #555;
}

.vbar .thumb {
  height: 18%;
  background-color: #fafafa;
  border-bottom: 1px solid #b8b8b8;
}

.hbar .thumb {
  width: 81%;
  background-color: #fafafa;
  border-right: 1px solid #b8b8b8;
}

.splitter {
  align-self: center;
  width: 6px;
  height: 18px;
  background: radial-gradient(#aaa 30%, transparent 30%) 2px 0 / 3px 3px repeat-y;
}

/* render view */
.views {
  display: flex;
  flex-direction: column;
  flex: 1;
  min-width: 0;
  padding: 0 2px 3px 0;
}

.views .tabs {
  height: 28px;
}

.views .tab {
  display: flex;
  align-items: center;
  gap: 5px;
}

.views .layout {
  height: 27px;
  padding: 2px 12px 0 10px;
  border-left: 1px solid #b4b4b4;
  border-radius: 3px 3px 0 0;
  background: #fcfcfc;
}

.views .x {
  stroke: #555;
}

.frame {
  display: flex;
  flex-direction: column;
  flex: 1;
  min-height: 0;
  padding: 0 0 1px 1px;
  border-left: 1px solid #b4b4b4;
  border-bottom: 1px solid #b4b4b4;
  background-color: #fcfcfc;
}

.viewbar {
  display: flex;
  align-items: center;
  flex: none;
  height: 23px;
}

.viewbar .sep {
  height: 7px;
}

.mini {
  display: grid;
  place-items: center;
  width: 20px;
  height: 20px;
  font-size: 10px;
}

.mini svg {
  width: 14px;
  height: 14px;
}

.mini svg svg {
  width: 11px;
  height: 11px;
}

.query {
  display: flex;
  align-items: center;
  justify-content: center;
  color: #666658;
  font-size: 12px;
  font-weight: bold;
}

.dot {
  width: 2px;
  height: 2px;
  background-color: #f04020;
}

.faded svg {
  opacity: .5;
}

.viewbar h2 {
  margin-left: auto;
  padding-right: 12px;
  font-weight: bold;
  text-decoration: underline;
  text-underline-offset: 3px;
}

.view-buttons {
  display: flex;
  gap: 1px;
}

.view-buttons .btn {
  width: 20px;
  height: 19px;
}

.view-buttons .faded svg {
  stroke: #333;
}

.render {
  position: relative;
  display: grid;
  place-items: center;
  flex: 1;
  min-height: 0;
  border: 2px solid #0000f0;
  outline: 1px solid #fff;
  outline-offset: -3px;
  background-color: #52576e;
}

.axes {
  position: absolute;
  left: 58px;
  bottom: 58px;
  width: 48px;
  height: 48px;
}

.axes text {
  fill: #f0f0f0;
  font-family: "Liberation Sans", sans-serif;
  font-size: 11px;
}

/* color legend over the view */
.legend {
  position: absolute;
  right: 7px;
  bottom: 3px;
  display: flex;
  align-items: center;
  color: #fff;
  font-family: Lato, sans-serif;
  font-size: 17px;
}

.ramp {
  width: 16px;
  height: 178px;
  background: linear-gradient(#b40426, #de604d 17%, #f49a7b 30%, #f3c7b1 42%, #dddcdc 50%, #b9d0f9 60%, #8db0fe 72%, #6788ee 86%, #3b4cc0);
}

.legend ul {
  display: flex;
  flex-direction: column;
  justify-content: space-between;
  height: 198px;
  font-size: 16px;
}

.legend li {
  display: flex;
  align-items: center;
  gap: 6px;
  margin-left: -3px;
}

.legend li::before {
  content: "";
  width: 12px;
  height: 1px;
  background-color: #fff;
}

.legend-title {
  writing-mode: vertical-rl;
  transform: rotate(180deg);
}
```

FILE: flow.js
```javascript
// velocity magnitude profiles: x, then [y, value] pairs from the top wall to the bottom wall
const profiles = [
  [0,   [1, .3],   [2, 1],     [3, 1],    [20, 1],    [40, 1],   [41, 1],   [41.5, .9], [42, .2],   [42.5, 0],  [70, .05], [85, 0]],
  [34,  [1, .25],  [2, .95],   [3, 1],    [20, 1],    [40.5, 1], [41.5, .8],[42.5, .5], [44, .2],   [48, .06],  [70, .07], [85, 0]],
  [105, [1, .2],   [2.5, .8],  [4, 1],    [20, 1],    [38, 1],   [41.5, .8],[45, .55],  [49, .3],   [58, .04],  [79, .22], [85, .16]],
  [166, [1, .25],  [3, .75],   [6, .98],  [20, 1],    [34, 1],   [39.5, .8],[46, .5],   [52, .3],   [60.5, .02],[79, .3],  [85, .27]],
  [230, [1, .25],  [3, .72],   [8, .88],  [20, .93],  [30, .92], [39, .75], [47.5, .5], [54, .3],   [67, .02],  [81, .22], [85, .18]],
  [301, [1, .22],  [3.5, .65], [9, .82],  [20, .86],  [28, .86], [38, .72], [47.5, .5], [56, .3],   [79, .02],  [83, .04], [85, .04]],
  [376, [1, .2],   [5, .5],    [12, .76], [22, .8],   [29, .79], [38, .68], [49, .5],   [60, .32],  [82, .08],  [84, .05], [85, .03]],
  [444, [7.8, .2], [11, .5],   [16, .74], [26, .83],  [34, .81], [44, .67], [58, .5],   [68, .38],  [76, .24],  [77, .2],  [77.7, .1]],
  [480, [11.4, .25],[13, .55], [18, .77], [28, .86],  [36, .84], [48, .7],  [64, .52],  [71, .45],  [73, .42],  [73.5, .4],[73.9, .2]],
  [516, [15, .4],  [16, .65],  [20, .82], [30, .91],  [38, .89], [50, .76], [60, .66],  [66, .6],   [69, .57],  [69.5, .5],[70, .4]]
];

const colors = [
  [0, 46, 56, 145], [.1, 60, 78, 163], [.25, 98, 126, 190], [.4, 145, 163, 188], [.5, 170, 170, 162],
  [.6, 190, 158, 132], [.7, 196, 132, 104], [.8, 186, 98, 73], [.9, 168, 60, 48], [1, 140, 0, 24]
];

// linear interpolation in a list of rows sorted by their first number
function sample(rows, at) {
  let i = 1;
  while (i < rows.length - 1 && rows[i][0] < at) i++;
  const a = rows[i - 1];
  const b = rows[i];
  const t = Math.min(1, Math.max(0, (at - a[0]) / (b[0] - a[0])));
  return a.slice(1).map((v, k) => v + (b[k + 1] - v) * t);
}

const flat = profiles.map(p => p.flat());
const ctx = document.getElementById('flow').getContext('2d');

for (let x = 0; x < 516; x++) {
  const line = sample(flat, x);
  const points = [];
  for (let k = 0; k < line.length; k += 2) points.push([line[k], line[k + 1]]);
  const top = points[0][0];
  const bottom = x < 34 ? 42 : points[points.length - 1][0];
  for (let y = Math.round(top); y < Math.round(bottom); y++) {
    const value = sample(points, y + .5)[0];
    ctx.fillStyle = `rgb(${sample(colors, value).join(',')})`;
    ctx.fillRect(x, y, 1, 1);
  }
  // thin wall lines
  ctx.fillStyle = x < 376 ? 'rgba(46,60,150,.8)' : 'rgba(70,100,180,.7)';
  ctx.fillRect(x, Math.round(bottom) - 1, 1, 1);
}
```
